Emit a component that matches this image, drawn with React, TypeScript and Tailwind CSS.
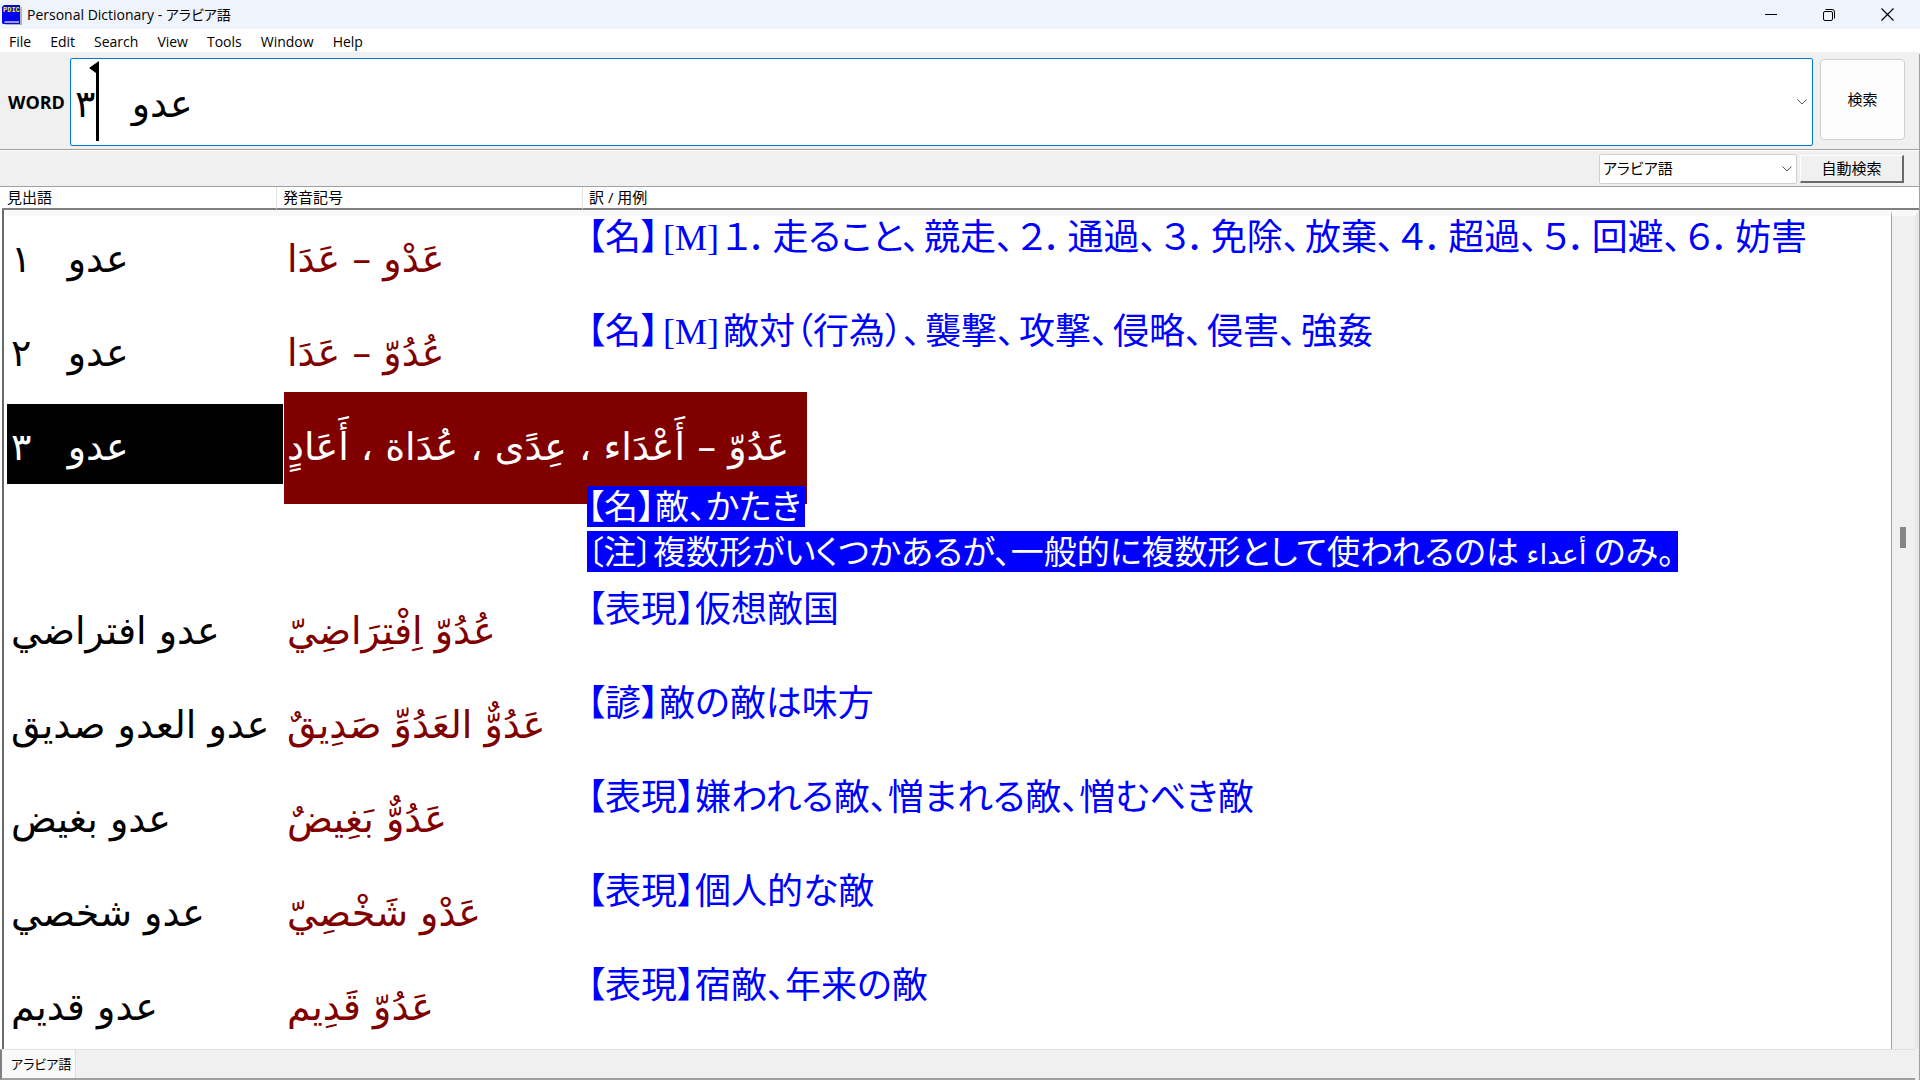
import React from "react";

type Sense = { no?: string; text: string };

type Entry = {
  word: string;
  phonetic: string;
  tag: string;
  text?: string;
  senses?: Sense[];
};

const before: Entry[] = [
  {
    word: "عدو\u00a0\u00a0 ١",
    phonetic: "عَدْو – عَدَا",
    tag: "【名】",
    senses: [
      { no: "１．", text: "走ること、" },
      { text: "競走、" },
      { no: "２．", text: "通過、" },
      { no: "３．", text: "免除、" },
      { text: "放棄、" },
      { no: "４．", text: "超過、" },
      { no: "５．", text: "回避、" },
      { no: "６．", text: "妨害" },
    ],
  },
  {
    word: "عدو\u00a0\u00a0 ٢",
    phonetic: "عُدُوّ – عَدَا",
    tag: "【名】",
    senses: [
      { text: "敵対（行為）、" },
      { text: "襲撃、" },
      { text: "攻撃、" },
      { text: "侵略、" },
      { text: "侵害、" },
      { text: "強姦" },
    ],
  },
];

const after: Entry[] = [
  { word: "عدو افتراضي", phonetic: "عُدُوّ اِفْتِرَاضِيّ", tag: "【表現】", text: "仮想敵国" },
  { word: "عدو العدو صديق", phonetic: "عَدُوٌّ العَدُوِّ صَدِيقٌ", tag: "【諺】", text: "敵の敵は味方" },
  { word: "عدو بغيض", phonetic: "عَدُوٌّ بَغِيضٌ", tag: "【表現】", text: "嫌われる敵、憎まれる敵、憎むべき敵" },
  { word: "عدو شخصي", phonetic: "عَدْو شَخْصِيّ", tag: "【表現】", text: "個人的な敵" },
  { word: "عدو قديم", phonetic: "عَدُوّ قَدِيم", tag: "【表現】", text: "宿敵、年来の敵" },
];

const arabic = "font-['DejaVu_Sans',sans-serif] text-[38px] whitespace-nowrap";
const japanese = "font-['Noto_Sans_CJK_JP',sans-serif] [font-feature-settings:'palt'] whitespace-nowrap";
const uiFont = "font-['Open_Sans','Noto_Sans_CJK_JP',sans-serif]";

function Row({ entry }: { entry: Entry }) {
  return (
    <tr className="h-[94px] align-top">
      <td className="border-l-2 border-[#696969] p-0 pl-[7px]">
        <div dir="rtl" className={`${arabic} pt-1.5 text-left leading-[74px] text-black`}>
          {entry.word}
        </div>
      </td>
      <td className="p-0 pl-2.5">
        <div dir="rtl" className={`${arabic} pt-1.5 text-left leading-[74px] text-[#800000]`}>
          {entry.phonetic}
        </div>
      </td>
      <td className={`${japanese} p-0 pl-1 text-[36px] leading-[36px] text-[#0000ff]`}>
        {entry.tag}
        {entry.senses && <span className="px-1 font-['Liberation_Serif',serif]">[M]</span>}
        {entry.senses?.map((sense) => (
          <React.Fragment key={sense.text}>
            {sense.no && <span className="mr-1">{sense.no}</span>}
            <span className="mr-1">{sense.text}</span>
          </React.Fragment>
        ))}
        {entry.text}
      </td>
    </tr>
  );
}

function Chevron() {
  return (
    <svg width="10" height="6" viewBox="0 0 10 6" fill="none" stroke="#555" aria-hidden="true">
      <path d="M0.5 0.5 L5 5 L9.5 0.5" />
    </svg>
  );
}

export default function App() {
  return (
    <div className={`${uiFont} flex h-screen flex-col overflow-hidden bg-[#f0f0f0] text-[14px] text-black`}>
      <header className="flex h-[29px] shrink-0 items-center bg-[#eff3fb]">
        <svg className="ml-0.5" width="20" height="20" viewBox="0 0 20 20" aria-hidden="true">
          <path d="M2 2H20V20H3Z" fill="#b4b4b4" />
          <path d="M2 0H18V19H1Q0 19 0 17V2Z" fill="#0000f4" />
          <path d="M3 16H17V18H2Z" fill="#9a9ad8" />
          <text x="1" y="7" fontSize="7" fontWeight="700" fontFamily="Liberation Mono" fill="#f4f400">
            PDIC
          </text>
        </svg>
        <h1 className="ml-[5px] text-[14px] [font-feature-settings:'palt']">Personal Dictionary - アラビア語</h1>
        <div className="mr-1 ml-auto flex h-full">
          <button aria-label="Minimize" className="flex w-[58px] items-center justify-center">
            <svg width="12" height="12" viewBox="0 0 12 12" stroke="#000">
              <path d="M0 5.5H12" />
            </svg>
          </button>
          <button aria-label="Restore" className="flex w-[58px] items-center justify-center">
            <svg width="12" height="12" viewBox="0 0 12 12" fill="none" stroke="#000">
              <rect x="0.5" y="2.5" width="9" height="9" rx="1.5" />
              <path d="M2.5 0.5H9Q11.5 0.5 11.5 3V9.5" />
            </svg>
          </button>
          <button aria-label="Close" className="flex w-[58px] items-center justify-center">
            <svg width="13" height="13" viewBox="0 0 13 13" stroke="#000" strokeWidth="1.2">
              <path d="M0.5 0.5L12.5 12.5M12.5 0.5L0.5 12.5" />
            </svg>
          </button>
        </div>
      </header>

      <nav className="flex h-[25px] shrink-0 items-center gap-[19px] border-b-2 border-[#f0f0f0] bg-white pt-0.5 pl-[9px]">
        {["File", "Edit", "Search", "View", "Tools", "Window", "Help"].map((item) => (
          <button key={item}>{item}</button>
        ))}
      </nav>

      <main className="flex min-h-0 flex-1 flex-col border-r border-[#a0a0a0]">
        <div className="flex h-24 shrink-0 items-start border-b border-[#a0a0a0] pt-1">
          <label htmlFor="word" className="w-[70px] pl-2 text-[18px] leading-[88px] font-bold">
            WORD
          </label>
          <div className="relative flex h-[88px] flex-1 items-center rounded-[2px] border border-[#0078d7] bg-white pr-[5px]">
            <input
              id="word"
              dir="rtl"
              defaultValue={"عدو\u00a0\u00a0 ٣"}
              className={`${arabic} h-20 min-w-0 flex-1 pt-1 pl-1 text-left outline-none`}
            />
            <svg className="absolute top-0.5 left-[18px]" width="10" height="80" viewBox="0 0 10 80" aria-hidden="true">
              <path d="M10 0V80H7V12L0 7Z" />
            </svg>
            <Chevron />
          </div>
          <button className="mt-px mr-[14px] ml-[7px] h-[81px] w-[85px] rounded border border-[#d0d0d0] bg-[#fdfdfd] text-[15px]">
            検索
          </button>
        </div>

        <div className="flex h-[37px] shrink-0 items-center justify-end gap-[3px] border-t border-b border-t-white border-b-[#a0a0a0] pr-[15px]">
          <div className="relative">
            <select
              aria-label="Dictionary"
              className="h-[30px] w-[198px] appearance-none rounded-[2px] border border-[#d0d0d0] bg-white pl-[3px] text-[15px] [font-feature-settings:'palt']"
            >
              <option>アラビア語</option>
            </select>
            <div className="pointer-events-none absolute top-3 right-[5px]">
              <Chevron />
            </div>
          </div>
          <button className="h-7 w-[104px] border-t border-r-2 border-b-2 border-l border-t-white border-r-[#696969] border-b-[#696969] border-l-white text-[15px]">
            自動検索
          </button>
        </div>

        <div className="flex min-h-0 flex-1 overflow-hidden bg-white">
          <div className="min-w-0 flex-1 overflow-hidden pl-0.5">
            <table className="w-full table-fixed border-separate border-spacing-0">
              <colgroup>
                <col className="w-[275px]" />
                <col className="w-[306px]" />
                <col />
              </colgroup>
              <thead>
                <tr className="text-left text-[15px] leading-[21px] [&>th]:border-b-2 [&>th]:border-b-[#808080] [&>th]:p-0 [&>th]:font-normal">
                  <th className="border-r border-r-[#e3e3e3]">
                    <span className="pl-[5px]">見出語</span>
                  </th>
                  <th className="border-r border-r-[#e3e3e3]">
                    <span className="pl-1.5">発音記号</span>
                  </th>
                  <th>
                    <span className="pl-1.5">訳 / 用例</span>
                  </th>
                </tr>
              </thead>
              <tbody>
                <tr className="h-[6px] bg-[#f9f9f9]">
                  <td colSpan={3} className="border-l-2 border-[#696969] p-0" />
                </tr>
                {before.map((entry) => (
                  <Row key={entry.word} entry={entry} />
                ))}
                <tr className="h-[184px] align-top">
                  <td className="border-l-2 border-[#696969] p-0 pl-[3px]">
                    <div
                      dir="rtl"
                      className={`${arabic} w-[276px] bg-black pt-1.5 pl-1 text-left leading-[74px] text-white`}
                    >
                      {"عدو\u00a0\u00a0 ٣"}
                    </div>
                  </td>
                  <td className="p-0 pl-[7px]">
                    <div
                      dir="rtl"
                      className={`${arabic} -mt-3 w-[523px] bg-[#800000] pt-[18px] pb-5 pl-[3px] text-left leading-[74px] text-white`}
                    >
                      عَدُوّ – أَعْدَاء ، عِدًى ، عُدَاة ، أَعَادٍ
                    </div>
                  </td>
                  <td className="p-0 pt-[82px] pl-1">
                    <div className="relative flex flex-col items-start gap-1 text-white">
                      <p className={`${japanese} bg-[#0000ff] pr-1 pb-[3px] text-[34px] leading-[38px]`}>
                        【名】敵、かたき
                      </p>
                      <p className={`${japanese} bg-[#0000ff] pr-1 pb-[3px] text-[33px] leading-[38px]`}>
                        〔注〕複数形がいくつかあるが、一般的に複数形として使われるのは{" "}
                        <span className="font-['DejaVu_Sans',sans-serif] text-[28px] leading-none">أعداء</span> のみ。
                      </p>
                    </div>
                  </td>
                </tr>
                {after.map((entry) => (
                  <Row key={entry.word} entry={entry} />
                ))}
              </tbody>
            </table>
          </div>
          <div className="flex w-[28px] shrink-0 flex-col">
            <div className="h-[23px] border-b-2 border-[#808080]" />
            <div className="flex flex-1 border-t-[6px] border-r-4 border-l border-[#e8e8e8] border-t-[#f9f9f9] border-l-[#a0a0a0] bg-[#f0f0f0]">
              <div className="mt-[311px] ml-2 h-[21px] w-1.5 bg-[#858585]" />
            </div>
          </div>
        </div>

        <footer className="mr-1 flex h-[31px] shrink-0 items-stretch border-t border-b-2 border-l-2 border-[#e0e0e0] border-b-[#a0a0a0] border-l-[#808080]">
          <button className="w-[74px] border-r border-[#e0e0e0] bg-[#f9f9f9] pt-0.5 pl-[9px] text-left text-[13px] [font-feature-settings:'palt']">
            アラビア語
          </button>
        </footer>
      </main>
    </div>
  );
}
